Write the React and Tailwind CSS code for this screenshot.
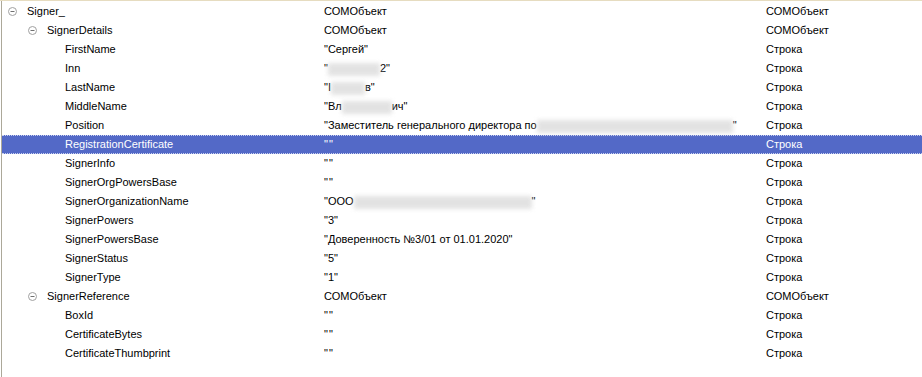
import React from "react";

const Minus = () => (
  <svg width="9" height="9" viewBox="0 0 9 9" className="block">
    <circle cx="4.5" cy="4.5" r="4" fill="white" stroke="#a0a0a0" strokeWidth="1" />
    <line x1="2.5" y1="4.5" x2="6.5" y2="4.5" stroke="#707070" strokeWidth="1" />
  </svg>
);

const Blur = ({ w }) => (
  <span className={`inline-block align-middle h-[13px] bg-[#dcdcdc] blur-[2px] opacity-80 ${w}`} />
);

const Empty = () => <span className="tracking-[1px]">""</span>;

const rows = [
  { l: 0, n: "Signer_", v: "СОМОбъект", t: "СОМОбъект", exp: true },
  { l: 1, n: "SignerDetails", v: "СОМОбъект", t: "СОМОбъект", exp: true },
  { l: 2, n: "FirstName", v: "\"Сергей\"", t: "Строка" },
  { l: 2, n: "Inn", v: <>"<Blur w="w-[52px]" />2"</>, t: "Строка" },
  { l: 2, n: "LastName", v: <>"I<Blur w="w-[34px]" />в"</>, t: "Строка" },
  { l: 2, n: "MiddleName", v: <>"Вл<Blur w="w-[50px]" />ич"</>, t: "Строка" },
  { l: 2, n: "Position", v: <>"Заместитель генерального директора по<Blur w="w-[196px]" />"</>, t: "Строка" },
  { l: 2, n: "RegistrationCertificate", v: <Empty />, t: "Строка", sel: true },
  { l: 2, n: "SignerInfo", v: <Empty />, t: "Строка" },
  { l: 2, n: "SignerOrgPowersBase", v: <Empty />, t: "Строка" },
  { l: 2, n: "SignerOrganizationName", v: <>"ООО<Blur w="w-[178px]" />"</>, t: "Строка" },
  { l: 2, n: "SignerPowers", v: "\"3\"", t: "Строка" },
  { l: 2, n: "SignerPowersBase", v: "\"Доверенность №3/01 от 01.01.2020\"", t: "Строка" },
  { l: 2, n: "SignerStatus", v: "\"5\"", t: "Строка" },
  { l: 2, n: "SignerType", v: "\"1\"", t: "Строка" },
  { l: 1, n: "SignerReference", v: "СОМОбъект", t: "СОМОбъект", exp: true },
  { l: 2, n: "BoxId", v: <Empty />, t: "Строка" },
  { l: 2, n: "CertificateBytes", v: <Empty />, t: "Строка" },
  { l: 2, n: "CertificateThumbprint", v: <Empty />, t: "Строка" },
];

const pads = ["pl-[4px]", "pl-[24px]", "pl-[42px]"];

export default function App() {
  return (
    <div
      className="w-[922px] h-[377px] bg-white overflow-hidden text-[11px] text-black"
      style={{ fontFamily: '"Liberation Sans", Arial, sans-serif' }}
    >
      <div className="h-px bg-[#e6dcc0]" />
      <div className="ml-px h-[376px] border-l border-[#aca899] pt-px">
        {rows.map((r, i) => (
          <div
            key={i}
            className={`flex items-center h-[19px] whitespace-nowrap ${
              r.sel ? "bg-[#5369c7] text-white border-y border-dotted border-[#c8d0f0]" : ""
            }`}
          >
            <div className={`w-[322px] flex items-center ${pads[r.l]}`}>
              <span className="w-[21px] flex items-center pl-[2px]">
                {r.exp && <Minus />}
              </span>
              <span>{r.n}</span>
            </div>
            <div className="w-[442px]">{r.v}</div>
            <div className="flex-1">{r.t}</div>
          </div>
        ))}
      </div>
    </div>
  );
}
